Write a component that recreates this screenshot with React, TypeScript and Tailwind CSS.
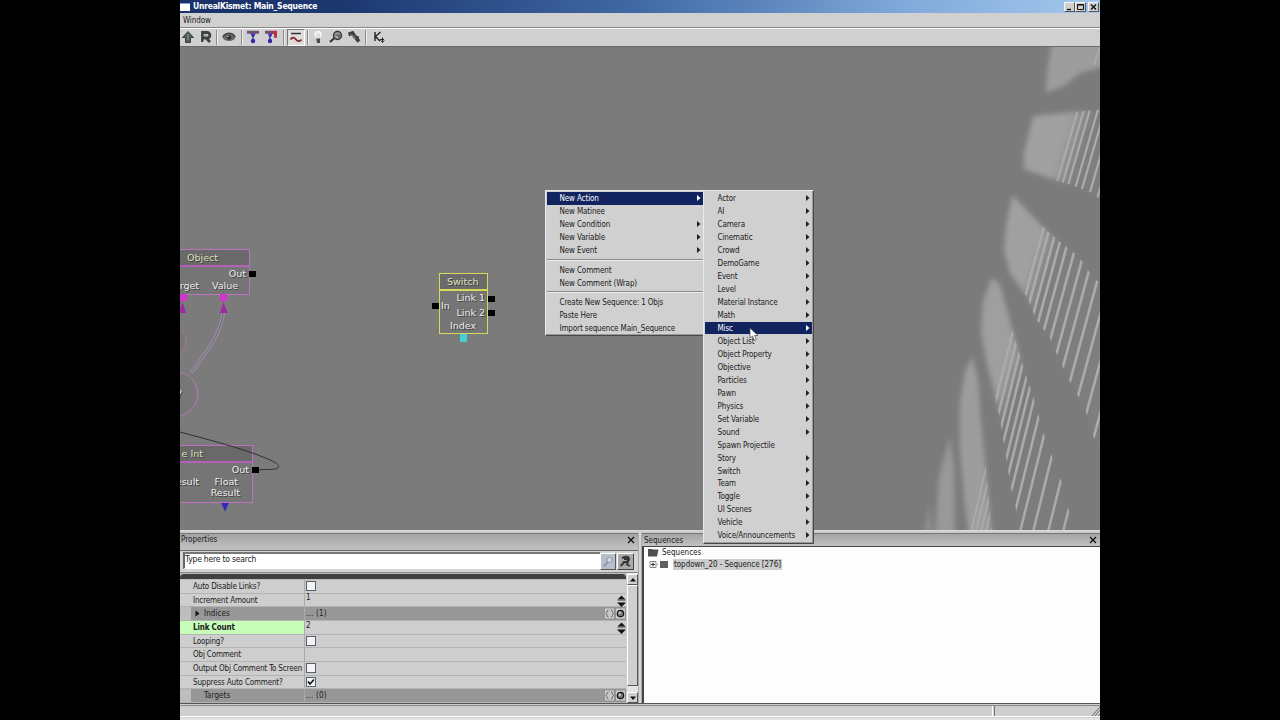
import type { ReactNode } from "react";

type MenuEntry = { label: string; sub?: boolean; active?: boolean } | null;

const contextMenu: MenuEntry[] = [
  { label: "New Action", sub: true, active: true },
  { label: "New Matinee" },
  { label: "New Condition", sub: true },
  { label: "New Variable", sub: true },
  { label: "New Event", sub: true },
  null,
  { label: "New Comment" },
  { label: "New Comment (Wrap)" },
  null,
  { label: "Create New Sequence: 1 Objs" },
  { label: "Paste Here" },
  { label: "Import sequence Main_Sequence" },
];

const actionMenu: MenuEntry[] = [
  "Actor", "AI", "Camera", "Cinematic", "Crowd", "DemoGame", "Event", "Level",
  "Material Instance", "Math", "Misc", "Object List", "Object Property", "Objective",
  "Particles", "Pawn", "Physics", "Set Variable", "Sound", "Spawn Projectile", "Story",
  "Switch", "Team", "Toggle", "UI Scenes", "Vehicle", "Voice/Announcements",
].map((label) => ({ label, sub: label !== "Spawn Projectile", active: label === "Misc" }));

type Property = {
  name: string;
  kind: "check" | "number" | "array" | "text";
  value?: string;
  checked?: boolean;
  selected?: boolean;
  expandable?: boolean;
};

const properties: Property[] = [
  { name: "Auto Disable Links?", kind: "check" },
  { name: "Increment Amount", kind: "number", value: "1" },
  { name: "Indices", kind: "array", value: "... (1)", expandable: true },
  { name: "Link Count", kind: "number", value: "2", selected: true },
  { name: "Looping?", kind: "check" },
  { name: "Obj Comment", kind: "text" },
  { name: "Output Obj Comment To Screen", kind: "check" },
  { name: "Suppress Auto Comment?", kind: "check", checked: true },
  { name: "Targets", kind: "array", value: "... (0)" },
];

function WindowButton({ children }: { children: ReactNode }) {
  return (
    <span className="flex h-[10px] w-[11px] items-center justify-center border border-t-[#f4f4f4] border-r-[#555] border-b-[#555] border-l-[#f4f4f4] bg-[#cfcfcf]">
      <svg width="9" height="8" viewBox="0 0 9 8" fill="none" stroke="#111">
        {children}
      </svg>
    </span>
  );
}

function TitleBar() {
  return (
    <div className="flex h-[13px] shrink-0 items-center bg-[linear-gradient(90deg,#1a3169_0%,#1d3870_18%,#4169a5_50%,#83abdb_80%,#a3c8ee_100%)] pr-px">
      <span className="mt-px h-[8px] w-[10px] border-t border-[#7fa4d8] bg-white" />
      <span className="ml-[3px] text-[8.500px] font-bold tracking-[-0.240px] text-white">UnrealKismet: Main_Sequence</span>
      <div className="ml-auto flex">
        <WindowButton><path d="M2 6.5h4" strokeWidth="1.4" /></WindowButton>
        <WindowButton><path d="M1.5 1.5h6v5h-6zM1.5 2h6" /></WindowButton>
        <span className="w-[2px]" />
        <WindowButton><path d="M2 1.5l5 5M7 1.5l-5 5" strokeWidth="1.4" /></WindowButton>
      </div>
    </div>
  );
}

function Tool({ children, pressed, className = "" }: { children: ReactNode; pressed?: boolean; className?: string }) {
  return (
    <span className={`flex h-[17px] w-[18px] shrink-0 items-center justify-center ${pressed ? "border border-t-[#777] border-r-white border-b-white border-l-[#777] bg-[#dedcdc]" : ""} ${className}`}>
      <svg className="shrink-0" width="14" height="14" viewBox="0 0 14 14" fill="none">
        {children}
      </svg>
    </span>
  );
}

function ToolSeparator({ className = "" }: { className?: string }) {
  return <span className={`h-[15px] w-[2px] shrink-0 border-l border-[#8b8b8b] bg-[#ededed] ${className}`} />;
}

function Toolbar() {
  return (
    <div className="flex h-[18px] shrink-0 items-center border-t border-white bg-[#d0d0d0] pb-px">
      <Tool className="-ml-px">
        <path d="M7 1.500l5.500 6H9.500V12.500h-5V7.500h-3z" fill="#4e5b55" stroke="#3a4540" />
        <path d="M7 4v6" stroke="#8fa79b" />
      </Tool>
      <Tool>
        <path d="M3.500 12V2.500h4.700a2.500 2.500 0 010 5.300H4M7 8l4 4" stroke="#3c4240" strokeWidth="2.800" />
        <path d="M4 5.200h4M4.500 10v2" stroke="#89938f" />
      </Tool>
      <ToolSeparator className="ml-px" />
      <Tool className="ml-[2px]">
        <ellipse cx="7" cy="7" rx="6.500" ry="4" fill="#68696a" />
        <path d="M1 7c3-5 9-5 12 0" stroke="#444" strokeWidth="1.400" />
        <circle cx="7" cy="7.500" r="2.300" fill="#303030" />
        <circle cx="6" cy="6.500" r=".8" fill="#bbb" />
      </Tool>
      <ToolSeparator className="ml-[3px]" />
      <Tool className="ml-px">
        <path d="M1 .8h12v2.900H1z" fill="#6d4f72" />
        <path d="M4.500 3.500h5l-1.500 3.500H6z" fill="#3d30ae" />
        <path d="M7 7v3" stroke="#5549b5" strokeWidth="1.500" />
        <circle cx="7" cy="11" r="2.200" fill="#3426a8" />
      </Tool>
      <Tool>
        <path d="M1 .8h6v2.900H1z" fill="#6d4f72" />
        <path d="M7 .8h6v7h-3V4H7z" fill="#b53343" />
        <path d="M4 3.500h4.500L7 7H5z" fill="#3d30ae" />
        <path d="M6 7v3" stroke="#5549b5" strokeWidth="1.500" />
        <circle cx="6" cy="11" r="2.200" fill="#3426a8" />
      </Tool>
      <ToolSeparator className="ml-[3px]" />
      <Tool pressed className="ml-[2px]">
        <path d="M2 3.500h10" stroke="#333" strokeWidth="1.500" />
        <path d="M1.500 9.500c2-3 4-2 5.500 0s4 2.500 5.500 0" stroke="#7e2527" strokeWidth="1.700" />
      </Tool>
      <ToolSeparator className="ml-[2px]" />
      <Tool>
        <circle cx="7" cy="4.500" r="3.700" fill="#f4f5f3" />
        <path d="M6 3.500v4M8 3.500v4" stroke="#c3cbc8" />
        <path d="M5.300 8.500h3.700V13H6z" fill="#454c4a" />
      </Tool>
      <Tool>
        <path d="M5.500 8l-4.500 4" stroke="#333" strokeWidth="2.200" />
        <circle cx="8.500" cy="5.500" r="3.900" fill="#a5a5a5" stroke="#333" strokeWidth="1.500" />
        <path d="M6.500 5h3.500v2.500" stroke="#444" strokeWidth="1.200" />
      </Tool>
      <Tool>
        <path d="M1.500 4.500l4-1.500 2.500 4 3.500 1.500M9 8l3 3.500" stroke="#3b3d3d" strokeWidth="3.600" />
        <path d="M3 4.500l3 1 3 3.500" stroke="#737a7a" strokeWidth="1.200" />
      </Tool>
      <ToolSeparator className="ml-[2px]" />
      <Tool className="ml-[3px]">
        <path d="M3 2v9M8.500 2L3.500 6.500 8 11" stroke="#222" strokeWidth="1.400" />
        <path d="M8 9.500h4M10.500 7.500v4M8.800 10.500l1.700 2 1.700-2" stroke="#222" />
      </Tool>
    </div>
  );
}

const bands = {
  a: "M1052 40H1106V65L1080 72 1064 85 1046 92 1047 72Z",
  b: "M1033 115L1075 111 1106 108V202L1090 191 1074 185 1058 180 1024 168 1024 152Z",
  c: "M1012 194L1022 204 1043 226 1059 240 1074 252 1082 260 1092 275 1106 288V445L1094 437 1084 405 1074 389 1058 356 1050 337 1036 318 1027 296 1010 272 1004 250 1006 225Z",
  d: "M992 276L1000 284 1006 305 1014 335 1024 368 1034 398 1044 434 1053 458 1062 482 1069 510 1074 535H1020L1016 508 1011 487 1005 450 1000 418 993 385 986 360 981 330 983 300Z",
  e: "M972 356L978 378 981 420 984 450 988 490 992 535H969L965 505 960 450 960 400 965 370Z",
  f: "M950 436L954 465 955 535H935L939 475Z",
};

// x of each streak where it meets the bottom edge of its band
const streaks = [
  { clip: "b", top: 105, bottom: 205, lean: 29, width: 2.2, xs: [1050, 1056, 1062, 1070, 1077, 1086, 1095] },
  { clip: "c", top: 200, bottom: 450, lean: 68, width: 2.6, xs: [983, 989, 996, 1003, 1011, 1020, 1030, 1040, 1051, 1063, 1076, 1090] },
  { clip: "d", top: 330, bottom: 535, lean: 51, width: 2.5, xs: [962, 968, 974, 980, 987, 993, 1000, 1009, 1019, 1032, 1047, 1062] },
  { clip: "e", top: 450, bottom: 535, lean: 20, width: 1.8, xs: [970, 975, 980, 985, 990] },
];

function CanvasShadows() {
  return (
    <svg className="absolute inset-0" width="920" height="484" viewBox="180 46 920 484">
      <defs>
        <filter id="soft" x="-10%" y="-10%" width="120%" height="120%"><feGaussianBlur stdDeviation="2.400" /></filter>
        <filter id="fine"><feGaussianBlur stdDeviation="0.700" /></filter>
        <clipPath id="b"><path d={bands.b} /></clipPath>
        <clipPath id="c"><path d={bands.c} /></clipPath>
        <clipPath id="d"><path d={bands.d} /></clipPath>
        <clipPath id="e"><path d={bands.e} /></clipPath>
        <linearGradient id="fadeB" gradientUnits="userSpaceOnUse" x1="1062" y1="140" x2="1084" y2="147">
          <stop offset="0" stopColor="#a0a0a0" /><stop offset="1" stopColor="#7e7e7e" />
        </linearGradient>
        <linearGradient id="fadeC" gradientUnits="userSpaceOnUse" x1="1033" y1="250" x2="1054" y2="257">
          <stop offset="0" stopColor="#a0a0a0" /><stop offset="1" stopColor="#7e7e7e" />
        </linearGradient>
        <linearGradient id="fadeD" gradientUnits="userSpaceOnUse" x1="1004" y1="372" x2="1020" y2="378">
          <stop offset="0" stopColor="#9f9f9f" /><stop offset="1" stopColor="#7c7c7c" />
        </linearGradient>
      </defs>
      <g filter="url(#soft)">
        <path d={bands.a} fill="#9d9d9d" />
        <path d={bands.b} fill="url(#fadeB)" />
        <path d={bands.c} fill="url(#fadeC)" />
        <path d={bands.d} fill="url(#fadeD)" />
        <path d={bands.e} fill="#9d9d9d" />
        <path d={bands.f} fill="#999" />
        <path d="M929 500L932 535H924Z" fill="#929292" />
      </g>
      <g filter="url(#fine)" stroke="#ababab">
        {streaks.map(({ clip, top, bottom, lean, width, xs }) => (
          <g key={clip} clipPath={`url(#${clip})`} strokeWidth={width}>
            {xs.map((x) => <path key={x} d={`M${x} ${bottom}L${x + lean} ${top}`} />)}
          </g>
        ))}
        <path d="M1094 64L1100 46" strokeWidth="2" />
      </g>
    </svg>
  );
}

function CanvasWires() {
  return (
    <svg className="absolute inset-0" width="920" height="484" viewBox="180 46 920 484" fill="none">
      <circle cx="175" cy="393" r="22.500" fill="#777" stroke="#b878b8" />
      <circle cx="169" cy="341" r="17" fill="#777" stroke="#a575a5" />
      <path d="M223.500 311C220 335 207 350 191 372" stroke="#b59ac0" strokeWidth="3.500" strokeOpacity=".55" />
      <path d="M223.500 311C220 335 207 350 191 372" stroke="#6c6679" />
      <path d="M223.500 301l4 11h-7.500zM182.500 301l3.500 11h-7z" fill="#a128a1" />
      <path d="M221 501.500h8l-4 9z" fill="#3128bd" />
    </svg>
  );
}

function Pin({ className }: { className: string }) {
  return <span className={`absolute ${className}`} />;
}

function NodeText({ className, children }: { className: string; children: ReactNode }) {
  return <span className={`absolute whitespace-nowrap leading-[12px] ${className}`}>{children}</span>;
}

function Canvas() {
  return (
    <div className="relative h-[484px] shrink-0 overflow-hidden border-t border-[#6a6a6a] bg-[#7b7b7b] font-['DejaVu_Sans'] text-[9.5px] text-[#ededed] [text-shadow:1px_1px_0_#3d3d3d]">
      <CanvasShadows />
      <CanvasWires />

      <div className="absolute top-[202px] -left-10 h-[46px] w-[110px] border border-[#c070c0] bg-[#757575]">
        <div className="h-[17px] border-b-2 border-[#b65fb6] bg-[#696969]" />
        <NodeText className="top-[2px] left-[46px] text-[#dde0bd]">Object</NodeText>
        <NodeText className="top-[18px] right-[3px]">Out</NodeText>
        <NodeText className="top-[30px] right-[50px]">rget</NodeText>
        <NodeText className="top-[30px] right-[11px]">Value</NodeText>
      </div>
      <Pin className="top-[224px] left-[69px] h-[6px] w-[7px] bg-black" />
      <Pin className="top-[247px] left-[40px] h-[7px] w-[7px] bg-[#d535cf]" />
      <Pin className="top-[247px] left-0 h-[7px] w-[7px] bg-[#d535cf]" />
      <NodeText className="top-[341px] -left-[3px]">?</NodeText>

      <div className="absolute top-[398px] -left-10 h-[58px] w-[113px] border border-[#c070c0] bg-[#757575]">
        <div className="h-[17px] border-b-2 border-[#b65fb6] bg-[#696969]" />
        <NodeText className="top-[2px] right-[49px] text-[#dde0bd]">e Int</NodeText>
        <NodeText className="top-[18px] right-[3px]">Out</NodeText>
        <NodeText className="top-[30px] right-[53px]">esult</NodeText>
        <NodeText className="top-[30px] right-[14px]">Float</NodeText>
        <NodeText className="top-[41px] right-[12px]">Result</NodeText>
      </div>
      <svg className="absolute top-[380px] left-0" width="110" height="50" viewBox="180 427 110 50" fill="none">
        <path d="M180 432C206 439 241 448 263 457C276 462 282 466 277 468.500C273 470 266 469 258 470" stroke="#303030" />
      </svg>
      <Pin className="top-[420px] left-[72px] h-[6px] w-[7px] bg-black" />

      <div className="absolute top-[226px] left-[259px] h-[61px] w-[49px] border border-[#d6da58] bg-[#757575]">
        <div className="h-[17px] border-b-2 border-[#d6da58] bg-[#6b6b6b]" />
        <NodeText className="top-[2px] left-[7px] text-[#dde0bd]">Switch</NodeText>
        <NodeText className="top-[18px] right-[2px]">Link 1</NodeText>
        <NodeText className="top-[26px] left-[1px]">In</NodeText>
        <NodeText className="top-[33px] right-[2px]">Link 2</NodeText>
        <NodeText className="top-[46px] left-[10px]">Index</NodeText>
      </div>
      <Pin className="top-[256px] left-[252px] h-[6px] w-[7px] bg-black" />
      <Pin className="top-[249px] left-[308px] h-[6px] w-[7px] bg-black" />
      <Pin className="top-[263px] left-[308px] h-[6px] w-[7px] bg-black" />
      <Pin className="top-[287px] left-[280px] h-[8px] w-[7px] bg-[#44cfd0]" />
    </div>
  );
}

function PanelHeader({ title, className = "" }: { title: string; className?: string }) {
  return (
    <div className={`flex shrink-0 items-center justify-between border-t border-[#777] bg-linear-to-b from-[#a4a4a4] to-[#c3c3c3] pr-[3px] leading-[11px] ${className}`}>
      <span>{title}</span>
      <svg width="8" height="8" viewBox="0 0 8 8" stroke="#111" strokeWidth="1.300"><path d="M1 1l6 6M7 1L1 7" /></svg>
    </div>
  );
}

function Checkbox({ checked }: { checked?: boolean }) {
  return (
    <span className="flex h-[10px] w-[10px] items-center justify-center border border-[#55606c] bg-[#f4f4f4]">
      {checked && (
        <svg width="8" height="8" viewBox="0 0 8 8" fill="none" stroke="#111" strokeWidth="1.700"><path d="M1 3.500l2 2.500L7 1.500" /></svg>
      )}
    </span>
  );
}

function PropertyRow({ item }: { item: Property }) {
  const isArray = item.kind === "array";
  return (
    <div className={`flex h-[13.67px] items-stretch border-b border-[#b3b3b3] leading-[14px] ${isArray ? "bg-[#979797]" : "bg-[#cecece]"}`}>
      <div className={`flex w-[125px] shrink-0 border-r border-[#aaa] ${item.selected ? "bg-[#c7fdb9]" : ""}`}>
        {isArray && <span className="w-[11px] shrink-0 bg-[#bdbdbd]" />}
        {isArray && (
          <svg width="13" height="13" viewBox="0 0 13 13">{item.expandable && <path d="M4.500 3.500v6l4-3z" fill="#111" />}</svg>
        )}
        <span className={`whitespace-nowrap ${isArray ? "tracking-[0.05px]" : "pl-[13px] tracking-[-0.170px]"} ${item.selected ? "font-bold" : ""}`}>{item.name}</span>
      </div>
      <div className="flex grow items-center pl-px">
        {item.kind === "check" ? <Checkbox checked={item.checked} /> : <span className={item.kind === "number" ? "-mt-[3px]" : "tracking-[0.2px]"}>{item.value}</span>}
      </div>
      {item.kind === "number" && (
        <svg className="shrink-0" width="9" height="13" viewBox="0 0 9 13">
          <path d="M4.500 1.500L8.500 5.500H.5zM.5 9h8L4.500 13z" fill="#151515" /><path d="M.5 6.200h8M.5 8.500h8" stroke="#444" strokeWidth=".8" />
        </svg>
      )}
      {isArray && (
        <svg className="shrink-0" width="22" height="13" viewBox="0 0 22 13">
          <path d="M.5 1h10v11H.5zM11.500 1h10v11h-10z" fill="#c9c9c9" stroke="#888" strokeWidth=".7" />
          <path d="M4.500 3C2.500 3 3.500 5.500 2 6.500c1.500 1 .5 3.500 2.500 3.500M7 3c2 0 1 2.500 2.500 3.500C8 7.500 9 10 7 10" fill="none" stroke="#555" strokeWidth=".9" />
          <circle cx="16.500" cy="6.500" r="3.200" fill="#777" stroke="#111" strokeWidth="1.200" /><circle cx="15.700" cy="5.700" r="1.200" fill="#ccc" />
        </svg>
      )}
    </div>
  );
}

function ScrollButton({ up }: { up?: boolean }) {
  return (
    <span className="flex h-[11px] shrink-0 items-center justify-center border border-t-white border-r-[#555] border-b-[#555] border-l-white bg-[#cfcfcf]">
      <svg width="6" height="4" viewBox="0 0 6 4"><path d={up ? "M3 0l3 3.500H0z" : "M0 .5h6L3 4z"} fill="#111" /></svg>
    </span>
  );
}

function PropertiesPanel() {
  return (
    <div className="flex w-[458px] shrink-0 flex-col">
      <PanelHeader title="Properties" className="h-[17px] pb-[5px] pl-px" />
      <div className="flex h-[22px] shrink-0 items-center border-t border-[#666] bg-[#d4d4d4] pl-[3px]">
        <div className="h-[17px] w-[417px] -translate-y-px border-t-2 border-b border-l-2 border-t-[#777] border-b-white border-l-[#666] bg-white text-[8.500px] leading-[11px] tracking-[-0.200px]">Type here to search</div>
        <span className="flex h-[17px] w-[16px] items-center justify-center border border-t-white border-r-[#555] border-b-[#555] border-l-white bg-[#b7c0ca]">
          <svg width="12" height="12" viewBox="0 0 12 12" fill="none" stroke="#8397aa"><circle cx="7.500" cy="4" r="2.700" fill="#d1dae3" /><path d="M5.500 6L2 10.500" strokeWidth="2" /></svg>
        </span>
        <span className="ml-px flex h-[17px] w-[17px] items-center justify-center border border-t-white border-r-[#444] border-b-[#444] border-l-white bg-[#aaa]">
          <svg width="13" height="13" viewBox="0 0 13 13" fill="none" stroke="#333" strokeWidth="1.900"><path d="M3 3.500C5 1 10 1 10 4S8 6 5 7.500L1.500 11M3.500 7.500L9 6.500l-1 3 3 1.500M5 4h4" /></svg>
        </span>
      </div>
      <div className="flex h-[131px] border-t border-[#888]">
        <div className="w-[446px]">
          <div className="h-[7px] bg-[#bbb] pt-px"><div className="h-[5px] rounded-t-[4px] bg-[#404040]" /></div>
          {properties.map((item) => <PropertyRow key={item.name} item={item} />)}
        </div>
        <div className="ml-px flex grow flex-col bg-[#e4e4e4] pt-px">
          <ScrollButton up />
          <span className="h-[101px] border border-t-white border-r-[#555] border-b-[#555] border-l-white bg-[#cfcfcf]" />
          <span className="grow" />
          <ScrollButton />
        </div>
      </div>
    </div>
  );
}

function SequencesPanel() {
  return (
    <div className="flex grow flex-col">
      <PanelHeader title="Sequences" className="h-[13px] pl-[2px]" />
      <div className="grow border-t border-l-2 border-[#444] bg-[#fdfdfd] pl-[4px]">
        <div className="flex h-[11px] items-center">
          <svg width="11" height="8" viewBox="0 0 11 8"><path d="M0 0h4l1 .5h5.500L9 7.500H0z" fill="#505050" /></svg>
          <span className="ml-[3px] leading-[11px]">Sequences</span>
        </div>
        <div className="flex h-[13px] items-center pl-px">
          <svg width="9" height="9" viewBox="0 0 9 9" fill="none"><path d="M1 1.500h6v6H1z" stroke="#888" /><path d="M2 4.500h4M4 2.500v4" stroke="#333" /><path d="M8 4.500h1" stroke="#999" /></svg>
          <span className="ml-[2px] h-[7px] w-[8px] bg-[#606060]" />
          <span className="ml-[5px] h-[11px] bg-[#cdcdcd] px-px leading-[11px] tracking-[-0.05px]">topdown_20 - Sequence [276]</span>
        </div>
      </div>
    </div>
  );
}

function StatusBar() {
  return (
    <div className="flex h-[17px] shrink-0 flex-col border-t border-[#555] bg-[#cfcfcf]">
      <div className="mt-px flex h-[13px] border-t border-b border-t-[#888] border-b-white">
        <span className="w-[813px] border-r border-white" />
        <span className="ml-px flex grow items-end justify-end border-l border-[#777]">
          <svg width="9" height="10" viewBox="0 0 9 10" stroke="#666"><path d="M1 10l8-9M4 10l5-6M7 10l2-2" /></svg>
        </span>
      </div>
      <div className="mt-px h-[2px] bg-[#e2e2e2]" />
    </div>
  );
}

function Menu({ entries, className }: { entries: MenuEntry[]; className: string }) {
  return (
    <div className={`absolute border border-t-[#e9e9e9] border-r-[#474747] border-b-[#474747] border-l-[#e9e9e9] bg-[#d0d0d0] p-px tracking-[-0.130px] shadow-[inset_-1px_-1px_0_#999] ${className}`}>
      {entries.map((entry, i) =>
        entry === null ? (
          <div key={i} className="flex h-[6.5px] items-center">
            <div className="h-[2px] grow border-t border-[#888] bg-[#eee]" />
          </div>
        ) : (
          <div key={i} className={`flex h-[12.96px] items-center justify-between pr-[2px] pl-[12.500px] whitespace-nowrap ${entry.active ? "bg-[#11245f] text-white" : ""}`}>
            <span className="pt-px leading-[13px]">{entry.label}</span>
            {entry.sub && <svg width="4" height="6" viewBox="0 0 4 6"><path d="M0 0v6L3.500 3z" fill="currentColor" /></svg>}
          </div>
        ),
      )}
    </div>
  );
}

export default function App() {
  return (
    <div className="flex h-[720px] w-[1280px] justify-center overflow-hidden bg-black">
      <div className="relative flex w-[920px] flex-col bg-[#cecece] font-['DejaVu_Sans_Condensed','DejaVu_Sans',sans-serif] text-[8px] text-[#202020]">
        <TitleBar />
        <div className="h-[15px] shrink-0 border-b border-[#888] bg-[#d0d0d0] pl-[3px] leading-[15px] tracking-[-0.1px]">Window</div>
        <Toolbar />
        <Canvas />
        <div className="h-[3px] shrink-0 bg-linear-to-b from-[#ddd] to-[#c4c4c4]" />
        <div className="flex h-[170px] shrink-0">
          <PropertiesPanel />
          <span className="w-[4px] shrink-0 border-x border-[#aaa] bg-[#d6d6d6]" />
          <SequencesPanel />
        </div>
        <StatusBar />
        <Menu entries={contextMenu} className="top-[190px] left-[365px] h-[146px] w-[160px]" />
        <Menu entries={actionMenu} className="top-[190px] left-[523px] h-[354px] w-[111px]" />
        <svg className="absolute top-[328px] left-[569px]" width="10" height="14" viewBox="0 0 10 14">
          <path d="M1 0v10l2.500-2 2 4.500 2-1-2-4H9z" fill="#fff" stroke="#444" strokeWidth=".7" />
        </svg>
      </div>
    </div>
  );
}
